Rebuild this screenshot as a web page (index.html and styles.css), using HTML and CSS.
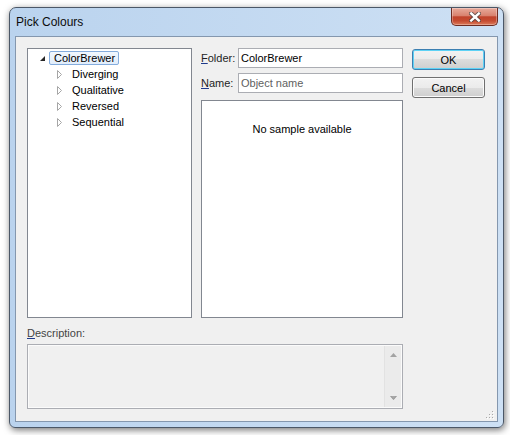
FILE: index.html
```html
<!DOCTYPE html>
<html>
<head>
<meta charset="utf-8">
<title>Pick Colours</title>
<link rel="stylesheet" href="styles.css">
</head>
<body>
<div class="window">
  <div class="titlebar">
    <span class="title">Pick Colours</span>
    <div class="close">
      <svg width="12" height="10" viewBox="0 0 12 10">
        <path d="M2.2 1.5 L9.8 8.5 M9.8 1.5 L2.2 8.5" stroke="#3b3b3b" stroke-width="4.2" stroke-linecap="square" fill="none" opacity="0.75"/>
        <path d="M2.2 1.5 L9.8 8.5 M9.8 1.5 L2.2 8.5" stroke="#ffffff" stroke-width="2.4" stroke-linecap="square" fill="none"/>
      </svg>
    </div>
  </div>
  <div class="client">
    <div class="top">
      <div class="tree">
        <div class="row root">
          <span class="twisty">
            <svg width="7" height="7" viewBox="0 0 7 7"><path d="M6 1 L6 6 L1 6 Z" fill="#262626"/></svg>
          </span>
          <span class="node selected">ColorBrewer</span>
        </div>
        <div class="row child">
          <span class="twisty"><svg width="6" height="9" viewBox="0 0 6 9"><path d="M0.5 0.5 L4.5 4.5 L0.5 8.5 Z" fill="#fff" stroke="#a6a6a6"/></svg></span>
          <span class="node">Diverging</span>
        </div>
        <div class="row child">
          <span class="twisty"><svg width="6" height="9" viewBox="0 0 6 9"><path d="M0.5 0.5 L4.5 4.5 L0.5 8.5 Z" fill="#fff" stroke="#a6a6a6"/></svg></span>
          <span class="node">Qualitative</span>
        </div>
        <div class="row child">
          <span class="twisty"><svg width="6" height="9" viewBox="0 0 6 9"><path d="M0.5 0.5 L4.5 4.5 L0.5 8.5 Z" fill="#fff" stroke="#a6a6a6"/></svg></span>
          <span class="node">Reversed</span>
        </div>
        <div class="row child">
          <span class="twisty"><svg width="6" height="9" viewBox="0 0 6 9"><path d="M0.5 0.5 L4.5 4.5 L0.5 8.5 Z" fill="#fff" stroke="#a6a6a6"/></svg></span>
          <span class="node">Sequential</span>
        </div>
      </div>
      <div class="mid">
        <div class="field">
          <span class="label"><u>F</u>older:</span>
          <div class="input">ColorBrewer</div>
        </div>
        <div class="field second">
          <span class="label"><u>N</u>ame:</span>
          <div class="input placeholder">Object name</div>
        </div>
        <div class="preview">No sample available</div>
      </div>
      <div class="buttons">
        <button class="btn default">OK</button>
        <button class="btn">Cancel</button>
      </div>
    </div>
    <div class="desc-label"><u>D</u>escription:</div>
    <div class="desc">
      <div class="desc-text"></div>
      <div class="scrollbar">
        <div class="sb-btn"><svg width="7" height="4" viewBox="0 0 7 4"><path d="M3.5 0 L7 4 L0 4 Z" fill="#a3a3a3"/></svg></div>
        <div class="sb-btn"><svg width="7" height="5" viewBox="0 0 7 5"><path d="M0 0 L7 0 L3.5 4 Z" fill="#8f8f8f"/><path d="M1 0 L6 0 L3.5 3 Z" fill="#a8a8a8"/></svg></div>
      </div>
    </div>
    <div class="grip">
      <svg width="9" height="8" viewBox="0 0 9 8">
        <rect x="7" y="0" width="1" height="1" fill="#a9a9a9"/>
        <rect x="4" y="3" width="1" height="1" fill="#a9a9a9"/>
        <rect x="7" y="3" width="1" height="1" fill="#a9a9a9"/>
        <rect x="1" y="6" width="1" height="1" fill="#a9a9a9"/>
        <rect x="4" y="6" width="1" height="1" fill="#a9a9a9"/>
        <rect x="7" y="6" width="1" height="1" fill="#a9a9a9"/>
        <rect x="8" y="1" width="1" height="1" fill="#ffffff"/>
        <rect x="5" y="4" width="1" height="1" fill="#ffffff"/>
        <rect x="8" y="4" width="1" height="1" fill="#ffffff"/>
        <rect x="2" y="7" width="1" height="1" fill="#ffffff"/>
        <rect x="5" y="7" width="1" height="1" fill="#ffffff"/>
        <rect x="8" y="7" width="1" height="1" fill="#ffffff"/>
      </svg>
    </div>
  </div>
</div>
</body>
</html>
```

FILE: styles.css
```css
html, body {
  margin: 0;
  padding: 0;
}

body {
  width: 510px;
  height: 435px;
  overflow: hidden;
  background: #ffffff;
  font-family: "Liberation Sans", Arial, sans-serif;
  font-size: 11px;
  color: #000;
}

.window {
  box-sizing: border-box;
  width: 495px;
  height: 421px;
  margin: 7px 0 0 9px;
  border: 1px solid #4b5767;
  border-radius: 7px 7px 6px 6px;
  padding: 0 5px 5px;
  background: linear-gradient(to right, #bad3ee, #cde0f4);
  box-shadow: 1px 2px 7px rgba(0, 0, 0, 0.55);
  display: flex;
  flex-direction: column;
}

.titlebar {
  height: 28px;
  flex: none;
  display: flex;
  justify-content: space-between;
  align-items: flex-start;
}

.title {
  font-size: 12px;
  line-height: 14px;
  margin-top: 7px;
  margin-left: 1px;
  color: #0c0c0c;
}

.close {
  box-sizing: border-box;
  width: 47px;
  height: 18px;
  border: 1px solid #6e2c22;
  border-top: none;
  border-radius: 0 0 5px 5px;
  background: linear-gradient(#e8aa9b 0%, #d9826f 45%, #c1432c 52%, #c54b31 75%, #dc7b5a 100%);
  box-shadow: inset 0 0 0 1px rgba(255, 255, 255, 0.3);
  display: flex;
  align-items: center;
  justify-content: center;
}

.client {
  flex: 1;
  box-sizing: border-box;
  border: 1px solid #8497ae;
  background: #f0f0f0;
  padding: 11px 12px 12px 11px;
  position: relative;
  display: flex;
  flex-direction: column;
}

.top {
  display: flex;
  height: 270px;
  flex: none;
}

.tree {
  width: 165px;
  box-sizing: border-box;
  border: 1px solid #828790;
  background: #ffffff;
  padding-top: 1px;
}

.row {
  height: 16px;
  display: flex;
  align-items: center;
}

.row.root {
  padding-left: 11px;
}

.row.root .twisty {
  width: 10px;
  display: flex;
  align-items: center;
}

.row.child {
  padding-left: 29px;
}

.row.child .twisty {
  width: 15px;
  display: flex;
  align-items: center;
}

.node {
  line-height: 14px;
  white-space: nowrap;
}

.node.selected {
  box-sizing: border-box;
  height: 14px;
  line-height: 12px;
  padding: 0 3px 0 4px;
  border: 1px solid #84acdd;
  border-radius: 2px;
  background: linear-gradient(#f1f7fe, #e1edfb);
}

.mid {
  width: 202px;
  margin-left: 9px;
  display: flex;
  flex-direction: column;
}

.field {
  display: flex;
  align-items: center;
  height: 20px;
  margin-bottom: 5px;
}

.field.second {
  margin-bottom: 7px;
}

.label {
  width: 37px;
  color: #1e1e1e;
}

.label u, .desc-label u {
  text-decoration-color: #1f3a8a;
}

.input {
  flex: 1;
  box-sizing: border-box;
  height: 20px;
  border: 1px solid #abadb3;
  background: #ffffff;
  padding-left: 2px;
  line-height: 18px;
  white-space: nowrap;
}

.input.placeholder {
  color: #5f5f5f;
}

.preview {
  flex: 1;
  box-sizing: border-box;
  border: 1px solid #828790;
  background: #ffffff;
  text-align: center;
  padding-top: 21px;
  line-height: 14px;
}

.buttons {
  width: 73px;
  margin-left: 9px;
  padding-top: 1px;
  display: flex;
  flex-direction: column;
  gap: 7px;
}

.btn {
  box-sizing: border-box;
  width: 73px;
  height: 21px;
  padding: 0;
  border: 1px solid #707070;
  border-radius: 3px;
  background: linear-gradient(#f2f2f2 0%, #ebebeb 50%, #dddddd 50%, #cfcfcf 100%);
  box-shadow: inset 0 0 0 1px #fbfbfb;
  font-family: "Liberation Sans", Arial, sans-serif;
  font-size: 11px;
  color: #000;
}

.btn.default {
  border-color: #3c7fb1;
  box-shadow: inset 0 0 0 1px #5ed2f5;
}

.desc-label {
  margin-top: 8px;
  height: 14px;
  line-height: 14px;
  margin-bottom: 4px;
  color: #444444;
}

.desc {
  width: 376px;
  height: 65px;
  box-sizing: border-box;
  border: 1px solid #abadb3;
  background: #f0f0f0;
  box-shadow: inset 0 0 0 1px #fbfbfb;
  display: flex;
}

.desc-text {
  flex: 1;
}

.scrollbar {
  width: 17px;
  margin: 1px 1px 1px 0;
  box-sizing: border-box;
  background: #ebebeb;
  border-left: 1px solid #e2e2e2;
  display: flex;
  flex-direction: column;
  justify-content: space-between;
}

.sb-btn {
  height: 17px;
  display: flex;
  align-items: center;
  justify-content: center;
}

.grip {
  position: absolute;
  right: 3px;
  bottom: 2px;
  width: 9px;
  height: 8px;
  display: flex;
}
```
